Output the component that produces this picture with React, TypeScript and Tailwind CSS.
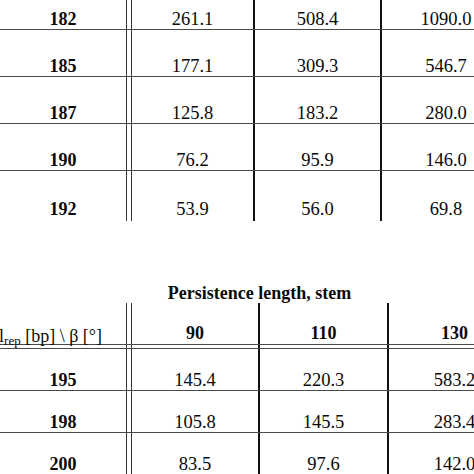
import React from "react";

const TOP = "grid grid-cols-[126px_6px_121px_127px_130px]";
const BOT = "grid grid-cols-[126px_6px_126px_129px_133px]";

type RowProps = {
  grid: string;
  h: string;
  cells: [React.ReactNode, React.ReactNode, React.ReactNode, React.ReactNode];
  border?: boolean;
  pb?: string;
};

function Row({ grid, h, cells, border = true, pb = "pb-0" }: RowProps) {
  const base = `flex items-end justify-center leading-[20px] ${pb}`;
  return (
    <div className={`${grid} ${h} ${border ? "border-b-[1.5px] border-[#4a4a4a]" : ""}`}>
      <div className={`${base} font-bold`}>{cells[0]}</div>
      <div className="h-full border-x-[1.5px] border-[#333]" />
      <div className={`${base} text-[18.5px]`}>{cells[1]}</div>
      <div className={`${base} text-[18.5px] border-l-2 border-[#111]`}>{cells[2]}</div>
      <div className={`${base} text-[18.5px] border-l-2 border-[#111]`}>{cells[3]}</div>
    </div>
  );
}

export default function App() {
  return (
    <div className="w-[474px] h-[474px] overflow-hidden bg-white text-[18px] text-[#0a0a0a] font-['Liberation_Serif','Times_New_Roman',serif]">
      {/* Top table */}
      <div>
        <Row grid={TOP} h="h-[30px]" cells={["182", "261.1", "508.4", "1090.0"]} />
        <Row grid={TOP} h="h-[47px]" cells={["185", "177.1", "309.3", "546.7"]} />
        <Row grid={TOP} h="h-[47px]" cells={["187", "125.8", "183.2", "280.0"]} />
        <Row grid={TOP} h="h-[47px]" cells={["190", "76.2", "95.9", "146.0"]} />
        <Row grid={TOP} h="h-[50px]" border={false} pb="pb-[2px]" cells={["192", "53.9", "56.0", "69.8"]} />
      </div>

      {/* Title */}
      <div className={`${BOT} mt-[62px] h-[20px]`}>
        <div className="col-start-3 col-span-2 whitespace-nowrap text-center font-bold leading-[20px]">
          Persistence length, stem
        </div>
      </div>

      {/* Bottom table header */}
      <div className={`${BOT} h-[41px]`}>
        <div className="flex items-end justify-end whitespace-nowrap pr-[24px] pb-[1px] leading-[14px]">
          <span>
            l<sub className="text-[13px]">rep</sub> [bp] \ β [°]
          </span>
        </div>
        <div className="h-full border-x-[1.5px] border-[#333]" />
        <div className="flex items-end justify-center pb-[1px] font-bold leading-[20px]">90</div>
        <div className="flex items-end justify-center pb-[1px] font-bold leading-[20px] border-l-2 border-[#111]">110</div>
        <div className="flex items-end justify-center pb-[1px] font-bold leading-[20px] border-l-2 border-[#111]">130</div>
      </div>
      <div className={`${BOT} h-[5px] border-y border-[#4a4a4a]`}>
        <div />
        <div className="h-full border-x-[1.5px] border-[#333]" />
        <div />
        <div className="border-l-2 border-[#111]" />
        <div className="border-l-2 border-[#111]" />
      </div>
      <Row grid={BOT} h="h-[42px]" cells={["195", "145.4", "220.3", "583.2"]} />
      <Row grid={BOT} h="h-[42px]" cells={["198", "105.8", "145.5", "283.4"]} />
      <Row grid={BOT} h="h-[48px]" border={false} pb="pb-[7px]" cells={["200", "83.5", "97.6", "142.0"]} />
    </div>
  );
}
